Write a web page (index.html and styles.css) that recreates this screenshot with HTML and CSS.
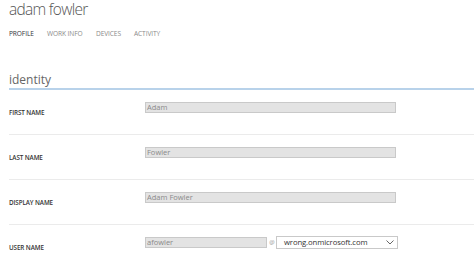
FILE: index.html
```html
<!DOCTYPE html>
<html>
<head>
<meta charset="utf-8">
<link rel="stylesheet" href="styles.css">
</head>
<body>
<div class="page">
  <h1 class="title">adam fowler</h1>
  <nav class="tabs">
    <span class="tab active">PROFILE</span>
    <span class="tab">WORK INFO</span>
    <span class="tab">DEVICES</span>
    <span class="tab">ACTIVITY</span>
  </nav>
  <h2 class="section">identity</h2>
  <div class="rows">
    <div class="row">
      <div class="label">FIRST NAME</div>
      <div class="field"><div class="input wide">Adam</div></div>
    </div>
    <div class="row">
      <div class="label">LAST NAME</div>
      <div class="field"><div class="input wide">Fowler</div></div>
    </div>
    <div class="row">
      <div class="label">DISPLAY NAME</div>
      <div class="field"><div class="input wide">Adam Fowler</div></div>
    </div>
    <div class="row last">
      <div class="label">USER NAME</div>
      <div class="field">
        <div class="input short">afowler</div>
        <span class="at">@</span>
        <div class="select">
          <span>wrong.onmicrosoft.com</span>
          <svg class="chev" width="8" height="5" viewBox="0 0 8 5"><path d="M0.5 0.5 L4 4 L7.5 0.5" fill="none" stroke="#666" stroke-width="1"/></svg>
        </div>
      </div>
    </div>
  </div>
</div>
</body>
</html>
```
FILE: styles.css
```css
html, body {
  margin: 0;
  padding: 0;
  background: #ffffff;
}
body {
  font-family: "Open Sans", "Noto Sans", sans-serif;
  color: #333;
}
.page {
  padding-left: 9px;
  width: 465px;
  overflow: hidden;
}
.title {
  margin: 0;
  height: 19px;
  font-size: 15.5px;
  line-height: 19px;
  font-weight: 300;
  color: #555;
  letter-spacing: -0.7px;
  padding-top: 0;
}
.tabs {
  display: flex;
  margin-top: 8px;
  height: 12px;
  align-items: center;
}
.tab {
  font-size: 6.6px;
  color: #8a8a8a;
  letter-spacing: -0.1px;
}
.tab:nth-child(1) { width: 38px; }
.tab:nth-child(2) { width: 49px; }
.tab:nth-child(3) { width: 38px; }
.tab.active {
  color: #333;
}
.section {
  margin: 0;
  margin-top: 32px;
  height: 17px;
  font-size: 12px;
  line-height: 17px;
  font-weight: 400;
  color: #666;
  border-bottom: 2px solid #b8d2ea;
}
.rows {
  display: flex;
  flex-direction: column;
}
.row {
  display: grid;
  grid-template-columns: 136px 1fr;
  height: 44px;
  border-bottom: 1px solid #ebebeb;
}
.row.last {
  border-bottom: none;
}
.label {
  font-size: 6.3px;
  font-weight: 600;
  color: #333;
  padding-top: 18px;
  letter-spacing: -0.1px;
}
.field {
  display: flex;
  align-items: center;
  height: 12px;
  margin-top: 11px;
}
.input {
  box-sizing: border-box;
  height: 11px;
  background: #e3e3e3;
  border: 1px solid #c9c9c9;
  font-size: 7.5px;
  line-height: 9px;
  color: #8a8a8a;
  padding-left: 1px;
}
.input.wide { width: 251px; }
.input.short { width: 122px; }
.at {
  width: 8px;
  margin: 0 0 0 1px;
  font-size: 6px;
  color: #999;
  text-align: center;
}
.select {
  box-sizing: border-box;
  width: 122px;
  height: 13px;
  border: 1px solid #c9c9c9;
  background: #fff;
  display: flex;
  align-items: center;
  justify-content: space-between;
  padding: 0 3px 0 7px;
  font-size: 7.7px;
  letter-spacing: -0.1px;
  color: #333;
}
.chev { display: block; }
```
